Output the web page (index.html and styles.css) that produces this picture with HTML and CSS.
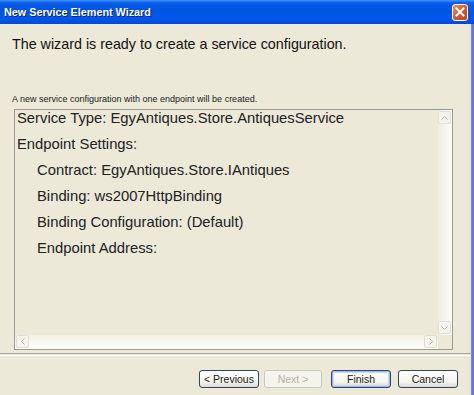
FILE: index.html
```html
<!DOCTYPE html>
<html lang="en">

<head>
  <meta charset="UTF-8">
  <meta name="viewport" content="width=device-width, initial-scale=1.0">
  <title>New Service Element Wizard</title>
  <link rel="stylesheet" href="styles.css">
</head>

<body>
  <div class="window">
    <div class="titlebar">
      <span class="title">New Service Element Wizard</span>
      <span class="close-btn">
        <svg width="10" height="10" viewBox="0 0 10 10">
          <path d="M1.5 1.5 L8.5 8.5 M8.5 1.5 L1.5 8.5" stroke="#fff" stroke-width="2" stroke-linecap="square" />
        </svg>
      </span>
    </div>

    <div class="frame">
      <div class="client">
        <h2 class="heading">The wizard is ready to create a service configuration.</h2>
        <p class="note">A new service configuration with one endpoint will be created.</p>

        <div class="summary">
          <div class="summary-text">
            <p>Service Type: EgyAntiques.Store.AntiquesService</p>
            <p>Endpoint Settings:</p>
            <p class="indent">Contract: EgyAntiques.Store.IAntiques</p>
            <p class="indent">Binding: ws2007HttpBinding</p>
            <p class="indent">Binding Configuration: (Default)</p>
            <p class="indent">Endpoint Address:</p>
          </div>
          <div class="vscroll">
            <span class="arrow">
              <svg width="7" height="4" viewBox="0 0 7 4"><path d="M0.5 3.5 L3.5 0.5 L6.5 3.5" fill="none" stroke="#b9b7aa" /></svg>
            </span>
            <span class="arrow">
              <svg width="7" height="4" viewBox="0 0 7 4"><path d="M0.5 0.5 L3.5 3.5 L6.5 0.5" fill="none" stroke="#b9b7aa" /></svg>
            </span>
          </div>
          <div class="hscroll">
            <span class="arrow">
              <svg width="4" height="7" viewBox="0 0 4 7"><path d="M3.5 0.5 L0.5 3.5 L3.5 6.5" fill="none" stroke="#b9b7aa" /></svg>
            </span>
            <span class="arrow">
              <svg width="4" height="7" viewBox="0 0 4 7"><path d="M0.5 0.5 L3.5 3.5 L0.5 6.5" fill="none" stroke="#b9b7aa" /></svg>
            </span>
          </div>
          <div class="corner"></div>
        </div>

        <div class="separator"></div>

        <div class="buttons">
          <button class="prev">&lt; Previous</button>
          <button class="next" disabled>Next &gt;</button>
          <button class="default">Finish</button>
          <button class="cancel">Cancel</button>
        </div>
      </div>
      <div class="edge"></div>
    </div>
  </div>
</body>

</html>
```

FILE: styles.css
```css
body {
  margin: 0;
  padding: 0;
  font-family: 'Liberation Sans', Arial, sans-serif;
  color: #1a1a1a;
  background: #ece9d8;
}

.window {
  width: 474px;
  height: 395px;
  display: flex;
  flex-direction: column;
  overflow: hidden;
}

.titlebar {
  height: 24px;
  flex-shrink: 0;
  display: flex;
  align-items: center;
  justify-content: space-between;
  padding: 0 6px 0 4px;
  background: linear-gradient(to bottom, #3d95ff 0%, #0a5fe8 12%, #0054e3 40%, #0058ea 80%, #0048d8 100%);
}

.title {
  color: #fff;
  font-weight: bold;
  font-size: 10.8px;
  text-shadow: 1px 1px 0 #0a1e80;
}

.close-btn {
  width: 14px;
  height: 15px;
  border: 1px solid #fff;
  border-radius: 3px;
  background: linear-gradient(135deg, #ee9474 0%, #dd5a30 45%, #c2431e 100%);
  display: flex;
  align-items: center;
  justify-content: center;
}

.frame {
  flex: 1;
  display: flex;
}

.client {
  flex: 1;
  display: flex;
  flex-direction: column;
}

.edge {
  width: 3px;
  background: linear-gradient(to right, #7b8fe0, #5469d4);
}

.heading {
  margin: 10px 0 0 12px;
  font-size: 14.3px;
  font-weight: normal;
  line-height: 20px;
  color: #111;
}

.note {
  margin: 39px 0 0 12px;
  font-size: 9px;
  line-height: 12px;
}

.summary {
  margin: 4px 0 0 14px;
  width: 437px;
  height: 239px;
  border: 1px solid #9a9a92;
  display: grid;
  grid-template-columns: 1fr 14px;
  grid-template-rows: 1fr 14px;
}

.summary-text {
  padding: 0 0 0 2px;
  font-size: 14.8px;
  line-height: 16px;
  color: #222;
  overflow: hidden;
  white-space: nowrap;
}

.summary-text p {
  margin: 0 0 10px;
}

.summary-text .indent {
  padding-left: 20px;
}

.vscroll {
  display: flex;
  flex-direction: column;
  justify-content: space-between;
  padding: 1px 0;
  background: linear-gradient(to right, #eeebdf, #fdfdfa);
}

.hscroll {
  display: flex;
  justify-content: space-between;
  padding: 0 1px;
  background: linear-gradient(to bottom, #f1efe5, #fdfdfa);
}

.corner {
  background: #ece9d8;
}

.arrow {
  width: 13px;
  height: 13px;
  box-sizing: border-box;
  border: 1px solid #e2e0d4;
  border-radius: 2px;
  background: #f4f3ec;
  display: flex;
  align-items: center;
  justify-content: center;
}

.separator {
  margin-top: 3px;
  height: 1px;
  border-top: 1px solid #aca899;
  border-bottom: 1px solid #fff;
}

.buttons {
  display: flex;
  justify-content: flex-end;
  padding: 14px 13px 0 0;
}

button {
  width: 60px;
  height: 18px;
  padding: 0;
  font-family: 'Liberation Sans', Arial, sans-serif;
  font-size: 10.5px;
  color: #222;
  border: 1px solid #2f4466;
  border-radius: 3px;
  background: linear-gradient(to bottom, #ffffff, #f4f3ee 70%, #dcd9cc);
}

button:disabled {
  color: #b5b2a4;
  border-color: #cac8bb;
  background: #f5f4ea;
}

button.next {
  width: 58px;
  margin-left: 5px;
}

button.default {
  margin-left: 9px;
  box-shadow: inset 0 0 0 1px #9cb8ef, inset 0 0 0 2px #c9d9f6;
}

button.cancel {
  margin-left: 7px;
}
```
